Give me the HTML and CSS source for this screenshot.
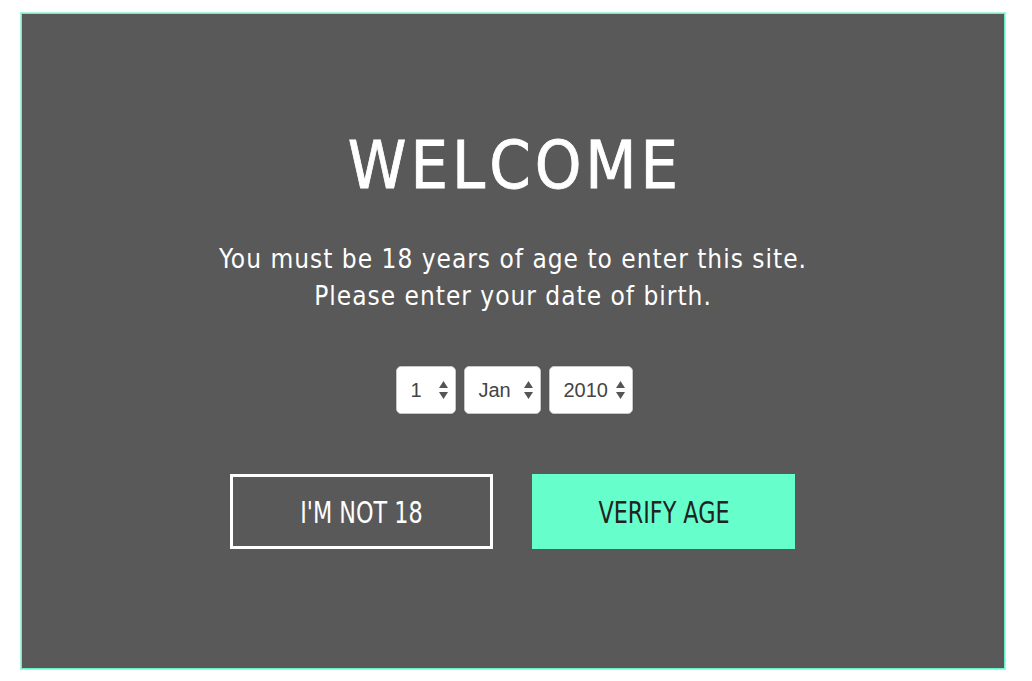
FILE: index.html
```html
<!DOCTYPE html>
<html lang="en">
<head>
	<meta charset="UTF-8">
	<title>Age Verification</title>
	<link rel="stylesheet" href="styles.css">
</head>
<body>
	<div class="age-gate">
		<div class="gate-box">
			<h1 class="title">WELCOME</h1>
			<p class="intro">You must be 18 years of age to enter this site.<br>Please enter your date of birth.</p>
			<div class="dob">
				<span class="pick pick-day">
					<select>
						<option>1</option>
					</select>
					<svg class="arrows" width="9" height="18" viewBox="0 0 9 18"><path d="M4.5 0L9 7H0z M4.5 18L0 11h9z" fill="#555"/></svg>
				</span>
				<span class="pick pick-month">
					<select>
						<option>Jan</option>
					</select>
					<svg class="arrows" width="9" height="18" viewBox="0 0 9 18"><path d="M4.5 0L9 7H0z M4.5 18L0 11h9z" fill="#555"/></svg>
				</span>
				<span class="pick pick-year">
					<select>
						<option>2010</option>
					</select>
					<svg class="arrows" width="9" height="18" viewBox="0 0 9 18"><path d="M4.5 0L9 7H0z M4.5 18L0 11h9z" fill="#555"/></svg>
				</span>
			</div>
			<div class="actions">
				<a href="#" class="btn btn-no"><span>I'M NOT 18</span></a>
				<a href="#" class="btn btn-yes"><span>VERIFY AGE</span></a>
			</div>
		</div>
	</div>
</body>
</html>
```

FILE: styles.css
```css
*{
	margin: 0;
	padding: 0;
	box-sizing: border-box;
}
body{
	background-color: #fff;
	font-family: "DejaVu Sans Condensed", "DejaVu Sans", sans-serif;
	font-stretch: condensed;
}
.age-gate{
	margin: 13px 27px 12px 21px;
	height: 656px;
	padding-top: 112px;
	background-color: #595959;
	border: 1px solid #66f2c6;
	box-shadow: 0 0 0 1px #a9f7dd;
	display: flex;
	justify-content: center;
}
.gate-box{
	display: flex;
	flex-direction: column;
	align-items: center;
	color: #fff;
}
.title{
	font-size: 66px;
	font-weight: normal;
	line-height: 80px;
	letter-spacing: 4px;
	margin-right: -4px;
	-webkit-text-stroke: 0.8px #fff;
}
.intro{
	margin-top: 35px;
	font-size: 26px;
	line-height: 37px;
	text-align: center;
	letter-spacing: 1px;
}
.dob{
	display: flex;
	gap: 8px;
	margin-top: 51px;
	margin-left: 4px;
}
.pick{
	position: relative;
	display: block;
}
.pick select{
	appearance: none;
	-webkit-appearance: none;
	display: block;
	height: 48px;
	padding: 0 0 0 13px;
	background-color: #fff;
	border: 1px solid #c8c8c8;
	border-radius: 5px;
	box-shadow: 0 0 1px rgba(0, 0, 0, 0.3);
	font-family: "Liberation Sans", Arial, sans-serif;
	font-size: 20px;
	color: #444;
	outline: none;
}
.pick-day select{
	width: 60px;
}
.pick-month select{
	width: 77px;
}
.pick-year select{
	width: 84px;
}
.pick .arrows{
	position: absolute;
	right: 8px;
	top: 15px;
	pointer-events: none;
}
.actions{
	display: flex;
	gap: 39px;
	margin-top: 60px;
}
.btn{
	display: flex;
	align-items: center;
	justify-content: center;
	width: 263px;
	height: 75px;
	font-size: 31px;
	text-decoration: none;
}
.btn span{
	display: block;
	transform: scaleX(0.8);
}
.btn-no{
	border: 3px solid #fff;
	color: #fff;
}
.btn-yes{
	background-color: #66ffcc;
	color: #222;
}
```
